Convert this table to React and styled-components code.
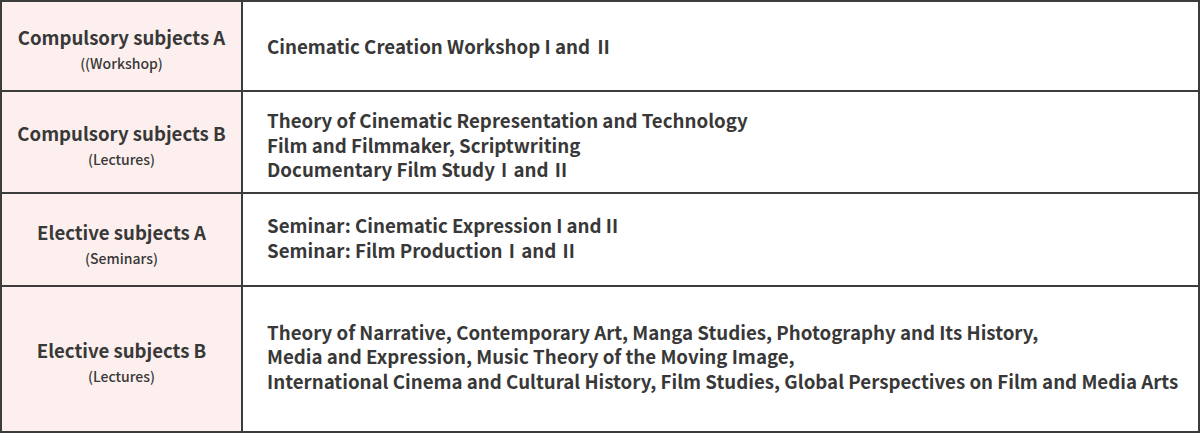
import React from "react";
import styled, { createGlobalStyle } from "styled-components";

const Global = createGlobalStyle`
  html, body { margin: 0; padding: 0; background: #fff; }
  body { font-family: "Noto Sans CJK JP", "Noto Sans", sans-serif; color: #333; }
`;

const Table = styled.div`
  display: grid;
  grid-template-columns: 241px 1fr;
  grid-template-rows: 90px 102px 93px 146px;
  width: 1200px;
  box-sizing: border-box;
  border-top: 2px solid #3c3c3c;
  border-left: 2px solid #3c3c3c;
`;

const Cell = styled.div`
  box-sizing: border-box;
  border-right: 2px solid #3c3c3c;
  border-bottom: 2px solid #3c3c3c;
  display: flex;
  flex-direction: column;
  justify-content: center;
  padding-top: ${(p) => Math.max(p.$shift || 0, 0)}px;
  padding-bottom: ${(p) => Math.max(-(p.$shift || 0), 0)}px;
`;

const HeadCell = styled(Cell)`
  background: #fcefee;
  align-items: center;
  text-align: center;
`;

const BodyCell = styled(Cell)`
  background: #fff;
  padding-left: 24px;
`;

const Title = styled.div`
  font-size: 18.6px;
  font-weight: 700;
  line-height: 25px;
  color: #383838;
  white-space: nowrap;
`;

const Sub = styled.div`
  margin-top: 3px;
  font-size: 14px;
  font-weight: 500;
  line-height: 23px;
  color: #383838;
`;

const Line = styled.div`
  font-size: 18.7px;
  font-weight: 700;
  line-height: 24.5px;
  color: #383838;
  white-space: pre;
`;

const rows = [
  {
    title: "Compulsory subjects A",
    sub: "((Workshop)",
    lines: ["Cinematic Creation Workshop I and Ⅱ"],
    hs: 6,
    bs: 0,
  },
  {
    title: "Compulsory subjects  B",
    sub: "(Lectures)",
    lines: [
      "Theory of Cinematic Representation and Technology",
      "Film and Filmmaker, Scriptwriting",
      "Documentary Film Study\u2004I\u2004and\u2004II",
    ],
    hs: 6,
    bs: 6,
  },
  {
    title: "Elective subjects A",
    sub: "(Seminars)",
    lines: [
      "Seminar: Cinematic Expression I and II",
      "Seminar: Film Production\u2004I\u2004and\u2004II",
    ],
    hs: 10,
    bs: -4,
  },
  {
    title: "Elective subjects B",
    sub: "(Lectures)",
    lines: [
      "Theory of Narrative, Contemporary Art, Manga Studies, Photography and Its History,",
      "Media and Expression, Music Theory of the Moving Image,",
      "International Cinema and Cultural History, Film Studies, Global Perspectives on Film and Media Arts",
    ],
    hs: 6,
    bs: -5,
  },
];

export default function App() {
  return (
    <>
      <Global />
      <Table>
        {rows.map((r, i) => (
          <React.Fragment key={i}>
            <HeadCell $shift={r.hs}>
              <Title>{r.title}</Title>
              <Sub>{r.sub}</Sub>
            </HeadCell>
            <BodyCell $shift={r.bs}>
              {r.lines.map((l, j) => (
                <Line key={j}>{l}</Line>
              ))}
            </BodyCell>
          </React.Fragment>
        ))}
      </Table>
    </>
  );
}
